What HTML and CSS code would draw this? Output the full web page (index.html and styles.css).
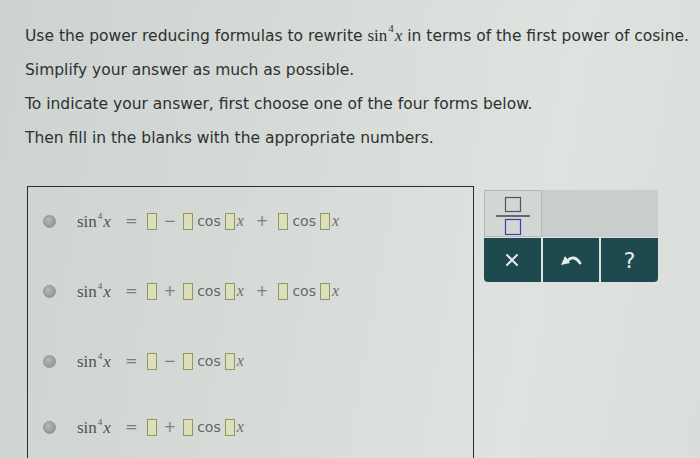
FILE: index.html
```html
<!DOCTYPE html>
<html>
<head>
<meta charset="utf-8">
<link rel="stylesheet" href="styles.css">
</head>
<body>
<div class="page">
  <div class="instructions">
    <p>Use the power reducing formulas to rewrite <span class="m">sin<sup>4</sup><i>x</i></span> in terms of the first power of cosine.</p>
    <p>Simplify your answer as much as possible.</p>
    <p>To indicate your answer, first choose one of the four forms below.</p>
    <p>Then fill in the blanks with the appropriate numbers.</p>
  </div>
  <div class="work">
    <div class="choices">
      <div class="row">
        <span class="radio"></span>
        <span class="lhs">sin<sup>4</sup><i>x</i></span>
        <span class="op eq">=</span>
        <span class="blank"></span>
        <span class="op">−</span>
        <span class="blank"></span><span class="cos">cos</span><span class="blank"></span><i class="x">x</i>
        <span class="op plus">+</span>
        <span class="blank"></span><span class="cos">cos</span><span class="blank"></span><i class="x">x</i>
      </div>
      <div class="row">
        <span class="radio"></span>
        <span class="lhs">sin<sup>4</sup><i>x</i></span>
        <span class="op eq">=</span>
        <span class="blank"></span>
        <span class="op">+</span>
        <span class="blank"></span><span class="cos">cos</span><span class="blank"></span><i class="x">x</i>
        <span class="op plus">+</span>
        <span class="blank"></span><span class="cos">cos</span><span class="blank"></span><i class="x">x</i>
      </div>
      <div class="row">
        <span class="radio"></span>
        <span class="lhs">sin<sup>4</sup><i>x</i></span>
        <span class="op eq">=</span>
        <span class="blank"></span>
        <span class="op">−</span>
        <span class="blank"></span><span class="cos">cos</span><span class="blank"></span><i class="x">x</i>
      </div>
      <div class="row last-row">
        <span class="radio"></span>
        <span class="lhs">sin<sup>4</sup><i>x</i></span>
        <span class="op eq">=</span>
        <span class="blank"></span>
        <span class="op">+</span>
        <span class="blank"></span><span class="cos">cos</span><span class="blank"></span><i class="x">x</i>
      </div>
    </div>
    <div class="toolbar">
      <div class="tool-top">
        <div class="tool-cell">
          <svg width="38" height="42" viewBox="0 0 38 42">
            <rect x="11.5" y="4.5" width="15" height="14" fill="none" stroke="#555" stroke-width="1.2"/>
            <line x1="2" y1="23" x2="36" y2="23" stroke="#444" stroke-width="1.4"/>
            <rect x="11.5" y="26.5" width="15" height="15" fill="none" stroke="#3b3fb0" stroke-width="1.2"/>
          </svg>
        </div>
      </div>
      <div class="tool-bottom">
        <div class="btn first">
          <svg width="14" height="14" viewBox="0 0 14 14"><path d="M2 2 L12 12 M12 2 L2 12" stroke="#e4eceb" stroke-width="2" stroke-linecap="round"/></svg>
        </div>
        <div class="btn">
          <svg width="26" height="16" viewBox="0 0 24 16"><path d="M8 9 Q15 2 21 11" fill="none" stroke="#e4eceb" stroke-width="2.8" stroke-linecap="round"/><polygon points="2,13 6,4 11,11" fill="#e4eceb"/></svg>
        </div>
        <div class="btn last"><span class="q">?</span></div>
      </div>
    </div>
  </div>
</div>
</body>
</html>
```

FILE: styles.css
```css
html, body {
  margin: 0;
  padding: 0;
  height: 100%;
  overflow: hidden;
}
body {
  background: linear-gradient(100deg, #cdd3d0 0%, #d6dbd8 40%, #dfe3e0 75%, #d9dedb 100%);
  font-family: "DejaVu Sans", Verdana, sans-serif;
  color: #2c3131;
}
.page {
  padding: 19px 0 0 0;
}
.instructions {
  padding-left: 25px;
}
.instructions p {
  margin: 0;
  font-size: 15.5px;
  line-height: 34px;
  height: 34px;
  white-space: nowrap;
}
.m {
  font-family: "Liberation Serif", "Times New Roman", serif;
  font-size: 17px;
  line-height: 1;
}
.m sup {
  font-size: 11px;
  line-height: 0;
  vertical-align: 9px;
  margin-left: 1px;
}
.m i {
  margin-left: 1px;
}
.work {
  display: flex;
  align-items: flex-start;
  margin-top: 31px;
}
.choices {
  margin-left: 27px;
  width: 447px;
  height: 320px;
  border: 1px solid #2a2e2e;
  border-bottom: none;
  padding-top: 24px;
  box-sizing: border-box;
  display: flex;
  flex-direction: column;
  gap: 50px;
}
.row {
  display: flex;
  align-items: center;
  height: 20px;
  padding-left: 15px;
  color: #5a5f5d;
}
.row.last-row {
  margin-top: -4px;
}
.radio {
  width: 13px;
  height: 13px;
  border-radius: 50%;
  background: radial-gradient(circle at 40% 35%, #b4b8b6 0%, #9a9e9c 60%, #8a8e8c 100%);
  border: 1px solid #8f9391;
  box-sizing: border-box;
  margin-right: 21px;
}
.lhs {
  font-family: "Liberation Serif", "Times New Roman", serif;
  font-size: 17px;
  color: #4e5352;
  width: 40px;
}
.lhs sup {
  font-size: 9px;
  vertical-align: 8px;
  margin-left: 1px;
}
.lhs i {
  margin-left: 1px;
}
.op {
  font-family: "DejaVu Sans", sans-serif;
  font-size: 15px;
  color: #7a7f7d;
  margin: 0 7px;
}
.op.eq {
  margin: 0 9px 0 8px;
}
.op.plus {
  margin: 0 10px 0 12px;
}
.blank {
  display: inline-block;
  width: 10px;
  height: 17px;
  background: #dcdfb9;
  border: 1px solid #8c9966;
  box-sizing: border-box;
}
.cos {
  font-family: "DejaVu Sans", sans-serif;
  font-size: 14px;
  color: #62676a;
  margin: 0 4px 0 4px;
}
.x {
  font-family: "Liberation Serif", "Times New Roman", serif;
  font-size: 16px;
  color: #6a6f6d;
  margin-left: 2px;
}
.toolbar {
  margin-left: 10px;
  margin-top: 4px;
  width: 174px;
}
.tool-top {
  height: 47px;
  background: #c9cdcb;
  border-radius: 3px 3px 0 0;
  display: flex;
}
.tool-cell {
  width: 58px;
  height: 47px;
  box-sizing: border-box;
  border: 1px solid #b3b8b6;
  background: #d2d6d4;
  display: flex;
  align-items: center;
  justify-content: center;
}
.tool-bottom {
  display: flex;
  gap: 2px;
  margin-top: 1px;
  height: 44px;
}
.btn {
  flex: 1;
  background: #1e4a4f;
  display: flex;
  align-items: center;
  justify-content: center;
}
.btn.first {
  border-bottom-left-radius: 4px;
}
.btn.last {
  border-bottom-right-radius: 4px;
}
.q {
  font-family: "DejaVu Sans", sans-serif;
  font-size: 22px;
  color: #e4eceb;
}
```
